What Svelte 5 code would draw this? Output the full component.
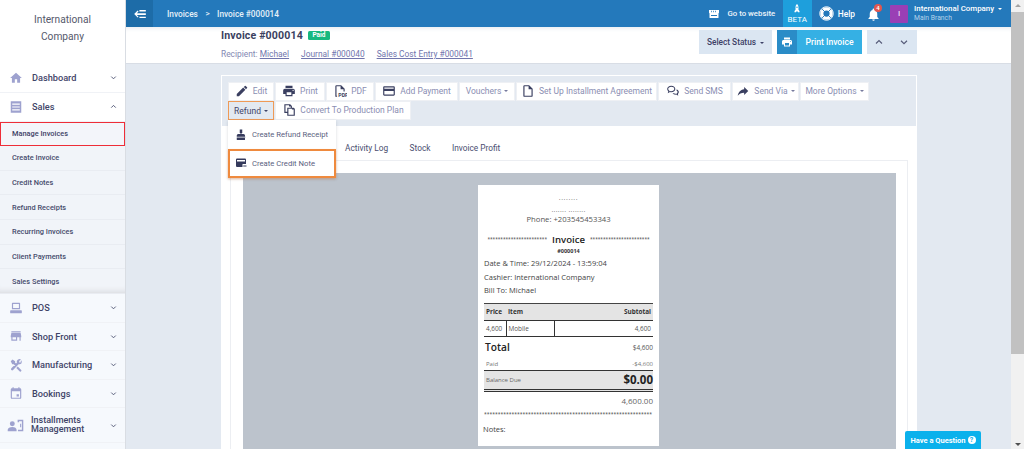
<script>
  const chevron = 'M6 9.5l6 6 6-6';
  const icons = {
    home: 'M10 20v-6h4v6h5v-8h3L12 3 2 12h3v8z',
    store: 'M20 4H4v2h16V4zm1 10v-2l-1-5H4l-1 5v2h1v6h10v-6h4v6h2v-6h1zm-9 4H6v-4h6v4z',
    pos: 'M6 3h12a1 1 0 0 1 1 1v10H5V4a1 1 0 0 1 1-1zm1 2v7h10V5zM3 16h18a1 1 0 0 1 1 1v3a1 1 0 0 1-1 1H3a1 1 0 0 1-1-1v-3a1 1 0 0 1 1-1z',
    tools: 'M3 5.5L6 2.500l4.500 3v2.500l3 3-2.500 2.500-3-3H5.500zM20.500 3.500a5 5 0 0 1 1 5.500 4.500 4.500 0 0 1-5 1.500L7 20.500a2 2 0 0 1-3-3l9.500-9.500a4.500 4.500 0 0 1 1.500-5 5 5 0 0 1 5.500-1l-3 3v2.500h2.500zM15 14.500l6 6a1.800 1.800 0 0 1-2.500 2.500l-6-6z',
    calendar: 'M19 4h-1V2h-2v2H8V2H6v2H5a2 2 0 0 0-2 2v14a2 2 0 0 0 2 2h14a2 2 0 0 0 2-2V6a2 2 0 0 0-2-2zm0 16H5V9h14v11zM13 14h4v4h-4z',
    installments: 'M7.500 6a3.500 3.500 0 1 1 0 7 3.500 3.500 0 0 1 0-7zM1 20v-2c0-2.500 3-4 6.500-4s6 1.500 6 4v2zM15 4h8v16h-7.500v-2H21V6h-4v1.500h-2zm3.500 5.500h1.500v5h-1.500z',
    pencil: 'M3 17.250V21h3.750L17.810 9.940l-3.750-3.750L3 17.250zM20.710 7.040a1 1 0 0 0 0-1.410l-2.340-2.340a1 1 0 0 0-1.410 0l-1.830 1.830 3.750 3.750 1.830-1.830z',
    print: 'M19 8H5c-1.660 0-3 1.340-3 3v6h4v4h12v-4h4v-6c0-1.660-1.340-3-3-3zm-3 11H8v-5h8v5zm3-7c-.550 0-1-.450-1-1s.450-1 1-1 1 .450 1 1-.450 1-1 1zm-1-9H6v4h12V3z',
    card: 'M20 4H4c-1.110 0-2 .890-2 2v12c0 1.110.890 2 2 2h16c1.110 0 2-.890 2-2V6c0-1.110-.890-2-2-2zm0 14H4v-6h16v6zm0-10H4V6h16v2z',
    file: 'M14 2H6a2 2 0 0 0-2 2v16a2 2 0 0 0 2 2h12a2 2 0 0 0 2-2V8l-6-6zm4 18H6V4h7v5h5v11z',
    share: 'M14 9V5l7 7-7 7v-4.100c-5 0-8.500 1.600-11 5.100 1-5 4-10 11-11z',
    copy: 'M4 2h10l3 3v3h3l2 2v12H9v-5H4zm2 2v11h3V8h6V6h-3V4zm5 6v10h9v-9h-3v-1z',
    chat: 'M9 3c4 0 7 2.300 7 5.500S13 14 9 14c-.8 0-1.500-.1-2.200-.3L3 16l.9-3.600C2.700 11.400 2 10 2 8.500 2 5.300 5 3 9 3zm0 1.800c-3 0-5.200 1.700-5.200 3.700 0 1.200.8 2.300 2 3l-.3 1.300 1.400-.8c.7.200 1.400.3 2.100.3 3 0 5.200-1.700 5.200-3.800S12 4.800 9 4.800zM18 9.500c2.500.6 4 2.200 4 4.300 0 1.300-.6 2.400-1.600 3.200L21 20l-3.500-1.800c-2.700.4-5-.4-6.300-2.200h2.300c1 .7 2.500 1 4 .6l1 .5-.2-1c1-.6 1.600-1.500 1.600-2.400 0-1-.7-1.900-1.900-2.500z',
    refund: 'M9.500 1h5v7h-1.500v2h4a3 3 0 0 1 3 3v8a1 1 0 0 1-1 1H4.500a1 1 0 0 1-1-1v-8a3 3 0 0 1 3-3h4.500V8H9.500zM3.500 15.500v1.500h17v-1.500z',
    note: 'M4 3h16a2 2 0 0 1 2 2v9h-7v6H4a2 2 0 0 1-2-2V5a2 2 0 0 1 2-2zm0 3v3h16V6zM16.500 17H23v2h-6.500z',
    bell: 'M12 22c1.100 0 2-.900 2-2h-4a2 2 0 0 0 2 2zm6-6v-5c0-3.070-1.640-5.640-4.500-6.320V4a1.500 1.500 0 0 0-3 0v.680C7.630 5.360 6 7.920 6 11v5l-2 2v1h16v-1l-2-2z',
    site: 'M2 4h20v5a2 2 0 0 1-1 1.700V19a1 1 0 0 1-1 1H4a1 1 0 0 1-1-1v-8.300A2 2 0 0 1 2 9zm4 10v2h12v-2zM6 5.500v3h1.500v-3zm4 0v3h1.500v-3zm4 0v3h1.500v-3z',
    rocket: 'M12 1c2.500 2 3.500 5 3.500 8v6l2.500 3v3h-3.500l-.5-2H10l-.5 2H6v-3l2.500-3V9c0-3 1-6 3.500-8zm0 6a1.800 1.800 0 1 0 0 3.600A1.800 1.800 0 0 0 12 7z'
  };
  const mainItems = [
    { label: 'POS', icon: 'pos' },
    { label: 'Shop Front', icon: 'store' },
    { label: 'Manufacturing', icon: 'tools' },
    { label: 'Bookings', icon: 'calendar' }
  ];
  const subItems = ['Create Invoice', 'Credit Notes', 'Refund Receipts', 'Recurring Invoices', 'Client Payments', 'Sales Settings'];
  const row1 = [
    { t: 'Edit', i: 'pencil', w: 46 },
    { t: 'Print', i: 'print', w: 50 },
    { t: 'PDF', i: 'pdf', w: 48 },
    { t: 'Add Payment', i: 'card', w: 83 },
    { t: 'Vouchers', caret: true, w: 56 },
    { t: 'Set Up Installment Agreement', i: 'file', w: 141 },
    { t: 'Send SMS', i: 'chat', w: 73 },
    { t: 'Send Via', i: 'share', caret: true, w: 67 },
    { t: 'More Options', caret: true, w: 69 }
  ];
</script>

<div class="page">
  <aside class="side">
    <div class="logo">International<br />Company</div>
    <div class="nav top">
      <svg class="nicon" viewBox="0 0 24 24"><path d={icons.home} /></svg>
      <span class="nlabel">Dashboard</span>
      <svg class="chev" viewBox="0 0 24 24"><path d={chevron} /></svg>
    </div>
    <div class="nav top sales">
      <svg class="nicon" viewBox="0 0 24 24"><path d="M3 2h18v20H3zm2.500 4v2h13V6zm0 5v2h13v-2zm0 5v2h13v-2z" /></svg>
      <span class="nlabel">Sales</span>
      <svg class="chev" viewBox="0 0 24 24"><path d="M6 15l6-6 6 6" /></svg>
    </div>
    <div class="subs">
      <div class="sub current">Manage Invoices</div>
      {#each subItems as s}
        <div class="sub">{s}</div>
      {/each}
    </div>
    {#each mainItems as m}
      <div class="nav">
        <svg class="nicon" viewBox="0 0 24 24"><path d={icons[m.icon]} /></svg>
        <span class="nlabel">{m.label}</span>
        <svg class="chev" viewBox="0 0 24 24"><path d={chevron} /></svg>
      </div>
    {/each}
    <div class="nav inst">
      <svg class="nicon wide" viewBox="0 0 24 24"><path d={icons.installments} /></svg>
      <span class="nlabel">Installments<br />Management</span>
      <svg class="chev" viewBox="0 0 24 24"><path d={chevron} /></svg>
    </div>
  </aside>

  <div class="main">
    <header class="topbar">
      <div class="toggle">
        <svg viewBox="0 0 24 24"><path d="M2 12l6-6 1.500 1.500L6.500 10.500H22v3H6.500l3 3L8 18zM11 5h11v2.500H11zM11 16.500h11V19H11z" /></svg>
      </div>
      <div class="crumbs"><span>Invoices</span><i>&gt;</i><span>Invoice #000014</span></div>
      <div class="tools">
        <svg class="site" viewBox="0 0 24 24"><path d={icons.site} fill-rule="evenodd" /></svg>
        <span class="goto">Go to website</span>
        <div class="beta">
          <svg viewBox="0 0 24 24"><path d={icons.rocket} /></svg>
          <span>BETA</span>
        </div>
        <svg class="buoy" viewBox="0 0 24 24">
          <circle cx="12" cy="12" r="7.500" fill="none" stroke="#fff" stroke-width="5" />
          <path d="M5 5l5 5M19 5l-5 5M5 19l5-5M19 19l-5-5" stroke="#2479bb" stroke-width="1.500" />
          <circle cx="12" cy="12" r="10.800" fill="none" stroke="#fff" stroke-width="1.500" />
        </svg>
        <span class="help">Help</span>
        <div class="bellwrap">
          <svg viewBox="0 0 24 24"><path d={icons.bell} /></svg>
          <b>4</b>
        </div>
        <div class="avatar">I</div>
        <div class="user">
          <div class="uname">International Company <em></em></div>
          <div class="ubranch">Main Branch</div>
        </div>
      </div>
    </header>

    <section class="subhead">
      <div class="titles">
        <div class="titleline"><h1>Invoice #000014</h1><span class="paid">Paid</span></div>
        <div class="meta">
          <span class="rec">Recipient: <u>Michael</u></span>
          <u class="j">Journal #000040</u>
          <u class="j2">Sales Cost Entry #000041</u>
        </div>
      </div>
      <div class="actions">
        <div class="status">Select Status <em></em></div>
        <div class="printbtn">
          <span class="pi"><svg viewBox="0 0 24 24"><path d={icons.print} /></svg></span>
          <span class="pt">Print Invoice</span>
        </div>
        <div class="pager">
          <svg viewBox="0 0 24 24"><path d="M6 15l6-6 6 6" /></svg>
          <svg viewBox="0 0 24 24"><path d={chevron} /></svg>
        </div>
      </div>
    </section>

    <section class="content">
      <div class="panel">
        <div class="toolbar">
          <div class="brow">
            {#each row1 as b}
              <div class="btn" style="width:{b.w}px">
                {#if b.i === 'pdf'}
                  <svg class="bi" viewBox="0 0 24 24"><path d="M14 2H6a2 2 0 0 0-2 2v18h3v-2H6V4h7v5h5v4h2V8z" /><text x="9" y="23" font-size="9" font-weight="700" font-family="Roboto">PDF</text></svg>
                {:else if b.i}
                  <svg class="bi" viewBox="0 0 24 24"><path d={icons[b.i]} /></svg>
                {/if}
                <span>{b.t}</span>
                {#if b.caret}<em></em>{/if}
              </div>
            {/each}
          </div>
          <div class="brow second">
            <div class="btn refund">Refund <em></em></div>
            <div class="btn convert"><svg class="bi" viewBox="0 0 24 24"><path d={icons.copy} /></svg><span>Convert To Production Plan</span></div>
          </div>
        </div>

        <nav class="tabs">
          <span>Activity Log</span><span>Stock</span><span>Invoice Profit</span>
        </nav>

        <div class="frame">
          <div class="viewer">
            <article class="receipt">
              <div class="c dots1">........</div>
              <div class="c dots2">....... ........</div>
              <div class="c phone">Phone: +203545453343</div>
              <div class="head"><span class="st">***********************</span><strong>Invoice</strong><span class="st">***********************</span></div>
              <div class="c num">#000014</div>
              <div class="ln first">Date &amp; Time: 29/12/2024 - 13:59:04</div>
              <div class="ln">Cashier: International Company</div>
              <div class="ln">Bill To: Michael</div>
              <table>
                <thead><tr><th class="p">Price</th><th class="it">Item</th><th class="su">Subtotal</th></tr></thead>
                <tbody><tr><td class="p">4,600</td><td class="it">Mobile</td><td class="su">4,600</td></tr></tbody>
              </table>
              <div class="tot"><strong>Total</strong><span>$4,600</span></div>
              <div class="paidrow"><span>Paid</span><span>-$4,600</span></div>
              <div class="due"><span>Balance Due</span><strong>$0.00</strong></div>
              <div class="amount">4,600.00</div>
              <div class="stars">*************************************************************</div>
              <div class="notes">Notes:</div>
            </article>
          </div>
        </div>

        <div class="menu">
          <div class="mi"><svg viewBox="0 0 24 24"><path d={icons.refund} fill-rule="evenodd" /></svg>Create Refund Receipt</div>
          <div class="mi hl"><svg viewBox="0 0 24 24"><path d={icons.note} /></svg>Create Credit Note</div>
        </div>
      </div>
    </section>
  </div>

  <div class="scroll"><i class="up"></i><div class="thumb"></div><i class="down"></i></div>

  <div class="question">Have a Question <span>?</span></div>
</div>

<style>
  :global(body) { margin: 0; background: #e3e9f1; }
  .page { position: relative; display: flex; height: 449px; width: 1024px; overflow: hidden; font-family: Roboto, sans-serif; color: #3d4166; }
  svg { display: block; flex: none; }

  .side { width: 125px; flex: none; border-right: 1px solid #d9dde3; background: #f6f9fd; box-sizing: content-box; overflow: hidden; }
  .logo { height: 64px; background: #fff; box-sizing: border-box; padding-top: 11px; text-align: center; font-size: 10.200px; line-height: 17px; color: #55596b; }
  .nav { height: 28.500px; display: flex; align-items: center; padding: 0 7px 0 9px; border-bottom: 1px solid #f0f2f6; box-sizing: border-box; }
  .nav.top { background: #fff; }
  .nav.sales { height: 29px; }
  .nicon { width: 14px; height: 14px; fill: #9ea2cf; margin-right: 9px; }
  .nicon.wide { width: 17px; height: 17px; margin-left: -2px; margin-right: 7px; }
  .nlabel { flex: 1; font-size: 9.200px; font-weight: 500; color: #3f4468; }
  .inst { height: 35px; align-items: center; }
  .inst .nlabel { line-height: 9px; font-size: 9px; }
  .chev { width: 9px; height: 9px; fill: none; stroke: #555a78; stroke-width: 2.600; }
  .subs { background: #f1f4f9; height: 172.500px; box-shadow: inset 0 -8px 6px -6px #d4d6da; box-sizing: border-box; }
  .sub { height: 24.700px; display: flex; align-items: center; padding-left: 12px; font-size: 7.400px; font-weight: 500; color: #464b6c; border-bottom: 1px solid #e9ecf2; box-sizing: border-box; }
  .sub.current { border: 1.500px solid #ee2d38; height: 24.500px; padding-left: 11px; background: #f3f5fa; color: #3d4166; }

  .main { flex: 1; min-width: 0; display: flex; flex-direction: column; }
  .topbar { height: 27px; flex: none; background: #2479bb; display: flex; align-items: center; color: #fff; }
  .toggle { width: 27px; height: 27px; background: #1d6ca8; display: flex; align-items: center; justify-content: center; }
  .toggle svg { width: 14px; height: 14px; fill: #fff; }
  .crumbs { margin-left: 14px; display: flex; align-items: center; font-size: 8.300px; font-weight: 500; color: #e6f0f8; }
  .crumbs i { font-style: normal; margin: 0 7.500px 0 7.500px; font-size: 8px; }
  .tools { margin-left: auto; display: flex; align-items: center; height: 27px; padding-right: 9px; }
  .site { width: 12px; height: 12px; fill: #fff; }
  .goto { font-size: 7.800px; font-weight: 500; margin: 0 7.500px 0 7.500px; color: #eef5fa; }
  .beta { width: 29px; height: 27px; background: #1e9fdc; display: flex; flex-direction: column; align-items: center; justify-content: center; font-size: 8px; line-height: 9px; }
  .beta svg { width: 10px; height: 11px; fill: #fff; margin-bottom: 1px; }
  .buoy { width: 15px; height: 15px; margin-left: 7px; }
  .help { font-size: 8.400px; font-weight: 500; margin: 0 12px 0 4px; }
  .bellwrap { position: relative; width: 13px; height: 17px; margin-right: 10px; }
  .bellwrap svg { width: 15px; height: 15px; fill: #fff; margin: 2px 0 0 -1px; }
  .bellwrap b { position: absolute; top: -1px; left: 7px; width: 8px; height: 8px; border-radius: 50%; background: #e2564f; font-size: 6px; line-height: 8px; text-align: center; font-weight: 500; }
  .avatar { width: 18px; height: 18px; background: #9a3fb5; border-radius: 1px; font-size: 8px; line-height: 18px; text-align: center; margin-right: 6px; }
  .user { width: 88px; }
  .uname { font-size: 7.900px; font-weight: 500; line-height: 10px; white-space: nowrap; }
  .uname em, .status em, .btn em { display: inline-block; width: 0; height: 0; border: 2.500px solid transparent; border-top-color: currentColor; border-bottom: 0; vertical-align: middle; margin-left: 2px; }
  .ubranch { font-size: 6.800px; line-height: 9px; color: #b4d3ea; }

  .subhead { height: 37px; flex: none; box-sizing: border-box; background: #fff; border-bottom: 1px solid #d8dde5; box-shadow: inset 0 5px 5px -4px #e4e8ee; padding: 0 94px 0 95px; display: flex; justify-content: space-between; }
  .titleline { display: flex; align-items: center; margin-top: 2px; height: 13px; }
  h1 { margin: 0; font-size: 10.600px; font-weight: 700; color: #3b3f5f; letter-spacing: .15px; }
  .paid { margin-left: 5px; width: 22px; height: 9px; background: #17b87f; border-radius: 1.500px; color: #fff; font-size: 6.500px; line-height: 9px; text-align: center; font-weight: 700; }
  .meta { font-size: 8.400px; margin-top: 7px; display: flex; color: #8488b3; }
  .meta u { color: #7175ad; }
  .j { margin-left: 12px; }
  .j2 { margin-left: 12px; }
  .actions { display: flex; padding-top: 3px; height: 24px; gap: 5px; }
  .status { width: 73px; height: 24px; background: #dbe6f2; font-size: 8.300px; font-weight: 500; line-height: 24px; text-align: center; color: #3d4166; }
  .printbtn { width: 85px; height: 24px; display: flex; color: #fff; font-size: 8.600px; font-weight: 500; }
  .pi { width: 20px; background: #2a8cc7; display: flex; align-items: center; justify-content: center; }
  .pi svg { width: 12px; height: 12px; fill: #fff; }
  .pt { flex: 1; background: #35b0e4; line-height: 24px; text-align: center; }
  .pager { width: 50px; height: 24px; background: #dbe6f2; display: flex; align-items: center; justify-content: space-between; padding: 0 7px 0 6px; box-sizing: border-box; }
  .pager svg { width: 12px; height: 12px; fill: none; stroke: #555a78; stroke-width: 2.200; }

  .content { flex: 1; min-height: 0; padding: 11px 94px 0 95px; overflow: hidden; }
  .panel { position: relative; height: 375px; background: #fff; box-sizing: border-box; border-top: 1px solid #fff; }
  .toolbar { background: #e3e9f1; height: 50px; margin: 0 0 0 1px; padding: 6px 0 0 6px; box-sizing: border-box; border-right: 1px solid #fff; box-shadow: -1px 0 0 #fff; }
  .brow { display: flex; height: 19px; gap: 1px; }
  .second { margin-top: 0; height: 20px; }
  .btn { box-sizing: border-box; height: 18.500px; background: #fff; border: 1px solid #eef0f4; display: flex; align-items: center; justify-content: center; font-size: 8.500px; color: #8a8eb2; white-space: nowrap; }
  .btn em { color: #777b9e; margin-left: 3px; }
  .bi { width: 14px; height: 14px; fill: #3a3f60; margin-right: 4px; }
  .refund { width: 46px; height: 19px; border: 1px solid #ef9a56; color: #3f4468; background: #e3e9f1; }
  .refund em { color: #3f4468; }
  .convert { width: 136px; }
  .tabs { height: 34px; box-sizing: border-box; padding-top: 10px; display: flex; align-items: center; gap: 21.500px; padding-left: 124px; font-size: 8.300px; color: #4a4e70; }
  .frame { margin: 0 9px; height: 290px; box-sizing: border-box; border: 1px solid #eceef2; padding: 12px 11.500px 0; }
  .viewer { background: #bcc3cc; height: 278px; display: flex; justify-content: center; padding-top: 12px; box-sizing: border-box; }

  .receipt { width: 181px; height: 261px; flex: none; margin-right: 1px; background: #fff; box-sizing: border-box; padding: 0 6px; font-family: "Open Sans", sans-serif; font-size: 7.500px; color: #555; }
  .c { text-align: center; }
  .dots1 { margin-top: 8px; line-height: 10px; font-size: 7px; letter-spacing: .6px; color: #777; }
  .dots2 { margin-top: 2px; line-height: 9px; font-size: 7px; letter-spacing: .3px; color: #777; }
  .phone { line-height: 10px; font-size: 7.700px; color: #555; }
  .head { display: flex; justify-content: center; align-items: center; gap: 5px; margin-top: 8px; height: 14px; white-space: nowrap; overflow: hidden; }
  .head strong { font-size: 9.600px; font-weight: 600; color: #222; }
  .st { font-size: 4.800px; letter-spacing: -.05px; color: #444; }
  .num { font-size: 5.500px; font-weight: 700; color: #333; line-height: 9px; margin-top: 1px; }
  .ln { line-height: 13.500px; font-size: 7.500px; color: #444; }
  .ln.first { margin-top: 1px; }
  table { width: 169px; margin-top: 5px; border-collapse: collapse; border-top: 1px solid #444; font-size: 6.400px; table-layout: fixed; }
  th { height: 16px; background: #e4e4e4; font-weight: 700; padding: 0 2px; color: #333; text-align: left; border-bottom: 1px solid #333; }
  td { height: 15px; padding: 0 2px; color: #555; border-bottom: 1px solid #333; }
  .p { width: 18px; }
  .it { width: 44px; }
  td.it { border-left: 1px solid #333; border-right: 1px solid #333; }
  .su { text-align: right; }
  .tot { display: flex; justify-content: space-between; align-items: center; height: 21px; font-size: 6.500px; }
  .tot strong { font-size: 10.200px; font-weight: 600; color: #222; padding-left: 1px; }
  .paidrow { display: flex; justify-content: space-between; height: 12px; align-items: center; font-size: 6px; color: #777; padding-left: 2px; }
  .due { display: flex; justify-content: space-between; align-items: center; height: 18px; background: #e4e4e4; border-top: 1px solid #333; border-bottom: 3px double #333; font-size: 6px; padding-left: 2px; color: #666; }
  .due strong { font-size: 11.500px; font-weight: 700; color: #222; }
  .amount { text-align: right; font-size: 8px; line-height: 11px; margin-top: 3px; color: #666; }
  .stars { margin-top: 3px; font-size: 5px; line-height: 10px; white-space: nowrap; overflow: hidden; color: #444; width: 171px; }
  .notes { margin-top: 5px; font-size: 7.500px; line-height: 10px; color: #444; margin-left: -1px; }

  .menu { position: absolute; left: 7px; top: 44px; width: 108px; background: #fff; box-shadow: 0 1px 3px rgba(60, 70, 90, .2); font-size: 7.700px; color: #5a5e7e; }
  .mi { height: 29px; display: flex; align-items: center; padding-left: 7px; box-sizing: border-box; }
  .mi svg { width: 12px; height: 12px; fill: #353a5c; margin-right: 5px; }
  .mi.hl { border: 2px solid #ef8a3e; padding: 0 0 1px 5px; box-shadow: 0 1px 2px rgba(239, 138, 62, .4); }

  .scroll { width: 13px; flex: none; background: #f1f1f1; position: relative; display: flex; flex-direction: column; align-items: center; }
  .thumb { width: 13px; height: 342px; background: #c1c1c1; margin-top: 5px; }
  .up { width: 0; height: 0; border: 3px solid transparent; border-bottom-color: #a3a3a3; border-top: 0; margin-top: 4px; }
  .down { width: 0; height: 0; border: 3px solid transparent; border-top-color: #505050; border-bottom: 0; position: absolute; bottom: 3px; }

  .question { position: absolute; left: 905px; top: 431px; width: 76px; height: 18px; background: #0bb1ec; border-radius: 2px 2px 0 0; color: #fff; font-size: 7.500px; font-weight: 700; display: flex; align-items: center; justify-content: center; gap: 2px; }
  .question span { width: 8px; height: 8px; border-radius: 50%; background: #fff; color: #0bb1ec; font-size: 7px; line-height: 8px; text-align: center; }
</style>
